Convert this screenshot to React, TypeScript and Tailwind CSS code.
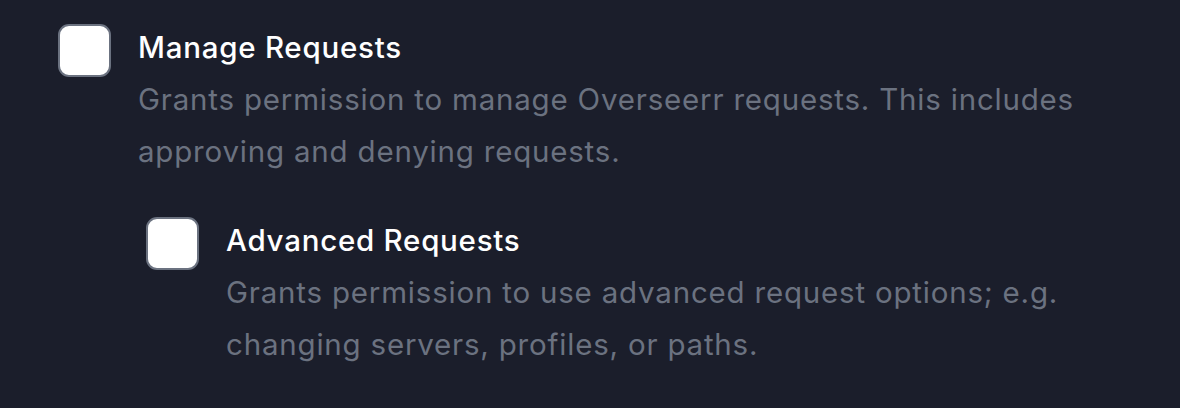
const permissions = [
  {
    id: "manage",
    name: "Manage Requests",
    description: "Grants permission to manage Overseerr requests. This includes approving and denying requests.",
    nested: false,
  },
  {
    id: "advanced",
    name: "Advanced Requests",
    description: "Grants permission to use advanced request options; e.g. changing servers, profiles, or paths.",
    nested: true,
  },
]

const Permission = ({ name, description, nested }: { name: string; description: string; nested: boolean }) => {
  return (
    <div className={nested ? "flex pl-[88px] mt-[37px]" : "flex"}>
      <div className="pt-[3px]">
        <div className="h-[53px] w-[53px] rounded-[11px] border-2 border-[#6b7280] bg-white" />
      </div>
      <div className="ml-[27px] flex flex-col">
        <span className="text-[29.5px] leading-[52px] font-medium tracking-[0.75px] text-white">{name}</span>
        <span className="w-[960px] text-[29.5px] leading-[52px] tracking-[0.8px] text-[#6b7280]">{description}</span>
      </div>
    </div>
  )
}

export default function App() {
  return (
    <div className="h-[408px] w-[1180px] bg-[#1b1e2b] pl-[58px] pt-[21px] font-['Inter',sans-serif]">
      {permissions.map((p) => (
        <Permission key={p.id} name={p.name} description={p.description} nested={p.nested} />
      ))}
    </div>
  )
}
